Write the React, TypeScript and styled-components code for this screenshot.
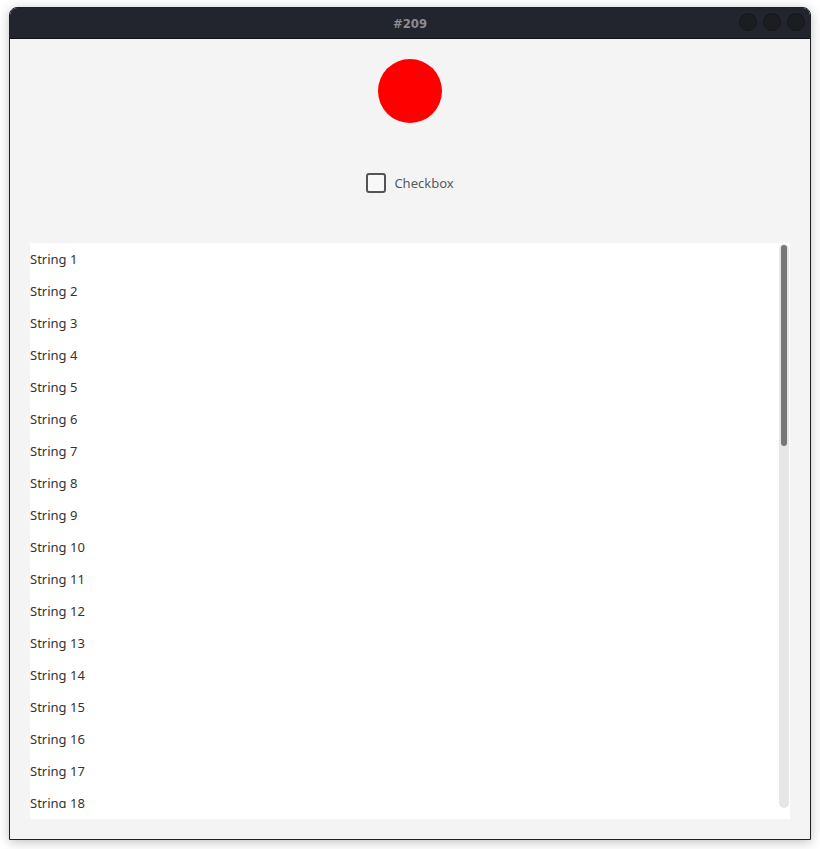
import styled, { createGlobalStyle } from "styled-components";

const GlobalStyle = createGlobalStyle`
  html, body {
    margin: 0;
    padding: 0;
    background: #ffffff;
  }
  body {
    font-family: "Noto Sans", "DejaVu Sans", sans-serif;
  }
`;

const Page = styled.div`
  width: 820px;
  height: 849px;
  padding: 7px 0 0 9px;
  box-sizing: border-box;
`;

const Window = styled.div`
  width: 802px;
  height: 833px;
  display: flex;
  flex-direction: column;
  border: 1px solid #1d1f24;
  border-radius: 8px 8px 0 0;
  box-sizing: border-box;
  overflow: hidden;
  box-shadow: 0 2px 12px rgba(0, 0, 0, 0.25);
`;

const TitleBar = styled.div`
  height: 30px;
  flex: none;
  position: relative;
  display: flex;
  align-items: center;
  justify-content: center;
  background: #22252d;
  border-bottom: 1px solid #111317;
`;

const Title = styled.span`
  font-family: "DejaVu Sans Condensed", "DejaVu Sans", sans-serif;
  font-weight: bold;
  font-size: 13px;
  color: #8b8d92;
`;

const Controls = styled.div`
  position: absolute;
  right: 5px;
  top: 5px;
  display: flex;
  gap: 6px;
`;

const ControlDot = styled.span`
  width: 18px;
  height: 18px;
  border-radius: 50%;
  background: #1b1d21;
  border: 1px solid #15171a;
  box-sizing: border-box;
`;

const Body = styled.div`
  flex: 1;
  display: flex;
  flex-direction: column;
  align-items: center;
  background: #f4f4f4;
  padding: 20px;
  min-height: 0;
`;

const RedDot = styled.div`
  width: 64px;
  height: 64px;
  border-radius: 50%;
  background: #ff0000;
  flex: none;
`;

const CheckRow = styled.label`
  margin-top: 50px;
  display: flex;
  align-items: center;
  gap: 8px;
  font-size: 13px;
  color: #555a60;
  flex: none;
`;

const Box = styled.span`
  width: 20px;
  height: 20px;
  border: 2px solid #555;
  border-radius: 3px;
  box-sizing: border-box;
  background: #f8f8f8;
`;

const ListPanel = styled.div`
  margin-top: 50px;
  align-self: stretch;
  flex: 1;
  min-height: 0;
  background: #ffffff;
  display: flex;
  padding-bottom: 11px;
  position: relative;
`;

const Items = styled.div`
  flex: 1;
  overflow: hidden;
`;

const Item = styled.div`
  height: 32px;
  line-height: 32px;
  font-size: 13px;
  color: #333;
`;

const Track = styled.div`
  position: absolute;
  right: 1px;
  top: 1px;
  bottom: 11px;
  width: 10px;
  border-radius: 5px;
  background: #e6e6e6;
`;

const Thumb = styled.div`
  margin: 1px 2px;
  width: 6px;
  height: 201px;
  border-radius: 3px;
  background: #777;
`;

const items = Array.from({ length: 18 }, (_, i) => `String ${i + 1}`);

export default function App() {
  return (
    <>
      <GlobalStyle />
      <Page>
        <Window>
          <TitleBar>
            <Title>#209</Title>
            <Controls>
              <ControlDot />
              <ControlDot />
              <ControlDot />
            </Controls>
          </TitleBar>
          <Body>
            <RedDot />
            <CheckRow>
              <Box />
              Checkbox
            </CheckRow>
            <ListPanel>
              <Items>
                {items.map((s) => (
                  <Item key={s}>{s}</Item>
                ))}
              </Items>
              <Track>
                <Thumb />
              </Track>
            </ListPanel>
          </Body>
        </Window>
      </Page>
    </>
  );
}
